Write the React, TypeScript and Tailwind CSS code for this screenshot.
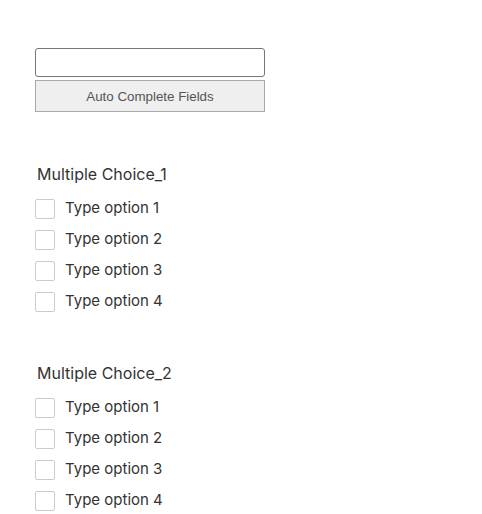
const options = ["Type option 1", "Type option 2", "Type option 3", "Type option 4"];

function ChoiceGroup({ title }: { title: string }) {
  return (
    <div className="flex flex-col">
      <h3 className="ml-[2px] text-[16px] leading-[24px] text-[#333333] font-normal">{title}</h3>
      <div className="mt-[7px] flex flex-col">
        {options.map((o) => (
          <label key={o} className="flex items-center h-[31px] gap-[10px]">
            <span className="w-[20px] h-[20px] border border-[#cccccc] rounded-[2px] bg-white shrink-0" />
            <span className="text-[15px] text-[#333333]">{o}</span>
          </label>
        ))}
      </div>
    </div>
  );
}

export default function App() {
  return (
    <div className="min-h-[514px] bg-white pl-[35px] pt-[48px] font-['Inter',sans-serif]">
      <div className="w-[230px] flex flex-col gap-[3px]">
        <input
          type="text"
          className="h-[29px] w-full border border-[#767676] rounded-[3px] bg-white outline-none px-2"
        />
        <button className="h-[32px] w-full pt-[1px] border border-[#a9a9a9] bg-[#efefef] text-[13.33px] text-[#555555] font-['Liberation_Sans',Arial,sans-serif]">
          Auto Complete Fields
        </button>
      </div>
      <div className="mt-[50px] flex flex-col gap-[44px]">
        <ChoiceGroup title="Multiple Choice_1" />
        <ChoiceGroup title="Multiple Choice_2" />
      </div>
    </div>
  );
}
